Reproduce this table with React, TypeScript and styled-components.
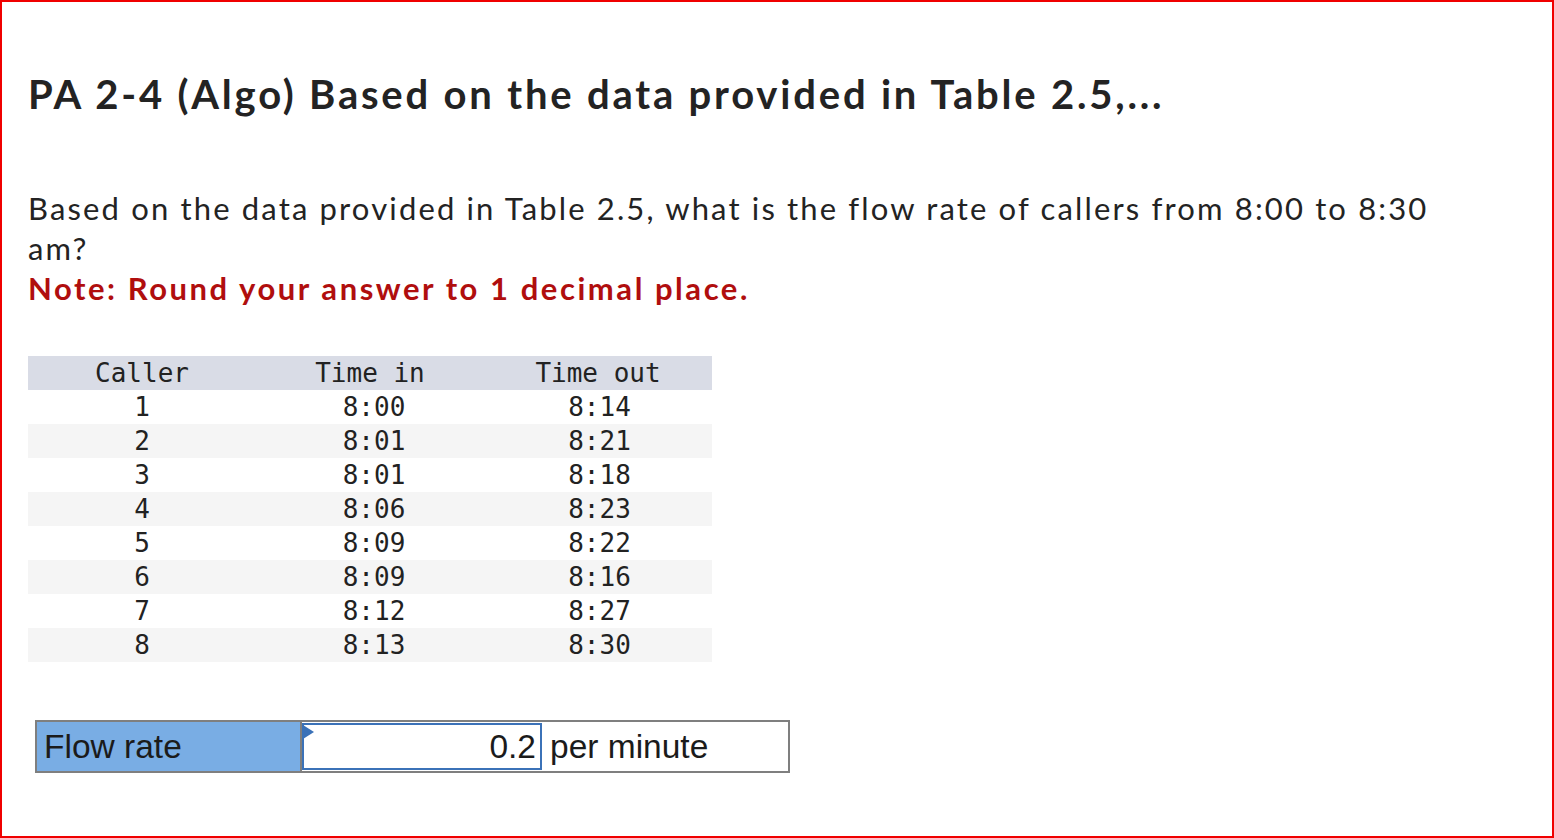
import React from 'react';
import styled, { createGlobalStyle } from 'styled-components';

const GlobalStyle = createGlobalStyle`
  html, body {
    margin: 0;
    padding: 0;
    background: #ffffff;
  }
`;

const Frame = styled.div`
  box-sizing: border-box;
  width: 1554px;
  height: 838px;
  border: 2px solid #f00000;
  padding: 68px 26px 0 26px;
  font-family: Lato, 'Noto Sans', sans-serif;
  color: #232323;
`;

const Title = styled.h1`
  margin: 0;
  font-size: 40px;
  font-weight: 700;
  line-height: 48px;
  letter-spacing: 2.8px;
`;

const Question = styled.p`
  margin: 70px 0 0 0;
  font-size: 31px;
  line-height: 40px;
  font-weight: 400;
  letter-spacing: 2.15px;
  max-width: 1420px;
`;

const Note = styled.span`
  display: block;
  color: #b00e0e;
  font-weight: 700;
  letter-spacing: 2.55px;
`;

const DataTable = styled.table`
  margin-top: 48px;
  border-collapse: collapse;
  width: 684px;
  font-family: 'DejaVu Sans Mono', 'Liberation Mono', monospace;
  font-size: 26px;
  color: #222;
`;

const HeadCell = styled.th`
  background: #d9dce6;
  font-weight: 400;
  height: 34px;
  padding: 0;
  width: 228px;
  text-align: center;
`;

const Row = styled.tr<{ $shade: boolean }>`
  background: ${(p) => (p.$shade ? '#f5f5f5' : '#ffffff')};
`;

const Cell = styled.td<{ $shift?: number }>`
  height: 34px;
  padding: 0 0 0 ${(p) => p.$shift ?? 0}px;
  text-align: center;
`;

const AnswerRow = styled.div`
  margin-top: 58px;
  margin-left: 7px;
  display: flex;
  width: 755px;
  height: 53px;
  box-sizing: border-box;
  border: 2px solid #7f7f7f;
  font-family: 'Liberation Sans', Arial, sans-serif;
  font-size: 33.5px;
  color: #1b1b1b;
`;

const Label = styled.div`
  width: 265px;
  background: #79ade4;
  border-right: 2px solid #7f7f7f;
  display: flex;
  align-items: center;
  padding-left: 7px;
  box-sizing: border-box;
`;

const InputBox = styled.div`
  position: relative;
  width: 240px;
  border: 2px solid #3b72b8;
  box-sizing: border-box;
  margin: 1px 0;
  display: flex;
  align-items: center;
  justify-content: flex-end;
  padding-right: 4px;
`;

const Marker = styled.span`
  position: absolute;
  left: -1px;
  top: 0;
  width: 0;
  height: 0;
  border-top: 7px solid transparent;
  border-bottom: 7px solid transparent;
  border-left: 11px solid #3b72b8;
`;

const Unit = styled.div`
  flex: 1;
  display: flex;
  align-items: center;
  padding-left: 8px;
`;

const rows = [
  ['1', '8:00', '8:14'],
  ['2', '8:01', '8:21'],
  ['3', '8:01', '8:18'],
  ['4', '8:06', '8:23'],
  ['5', '8:09', '8:22'],
  ['6', '8:09', '8:16'],
  ['7', '8:12', '8:27'],
  ['8', '8:13', '8:30'],
];

export default function App() {
  return (
    <>
      <GlobalStyle />
      <Frame>
        <Title>PA 2-4 (Algo) Based on the data provided in Table 2.5,...</Title>
        <Question>
          Based on the data provided in Table 2.5, what is the flow rate of callers from 8:00 to 8:30 am?
          <Note>Note: Round your answer to 1 decimal place.</Note>
        </Question>
        <DataTable>
          <thead>
            <tr>
              <HeadCell>Caller</HeadCell>
              <HeadCell>Time in</HeadCell>
              <HeadCell>Time out</HeadCell>
            </tr>
          </thead>
          <tbody>
            {rows.map((r, i) => (
              <Row key={r[0]} $shade={i % 2 === 1}>
                <Cell>{r[0]}</Cell>
                <Cell $shift={8}>{r[1]}</Cell>
                <Cell $shift={3}>{r[2]}</Cell>
              </Row>
            ))}
          </tbody>
        </DataTable>
        <AnswerRow>
          <Label>Flow rate</Label>
          <InputBox>
            <Marker />
            0.2
          </InputBox>
          <Unit>per minute</Unit>
        </AnswerRow>
      </Frame>
    </>
  );
}
